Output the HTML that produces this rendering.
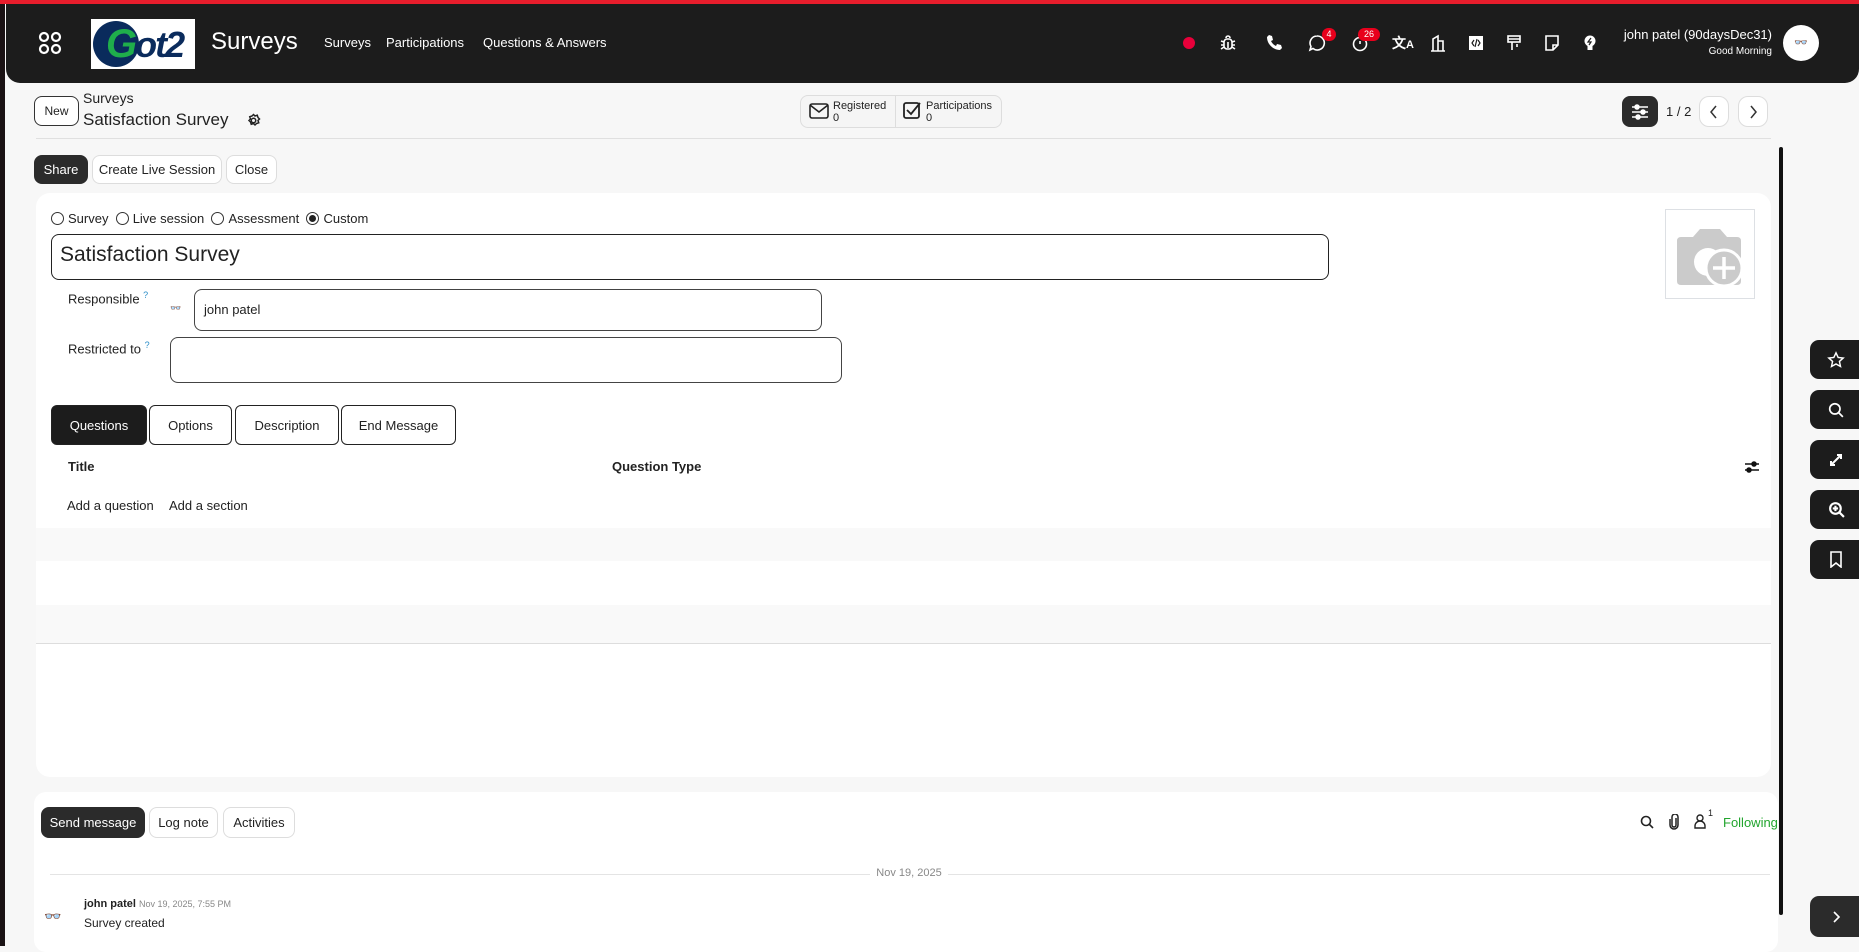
<!DOCTYPE html>
<html><head><meta charset="utf-8"><style>
*{box-sizing:border-box;margin:0;padding:0}
body{width:1859px;height:946px;overflow:hidden;background:#f7f7f7;font-family:"Liberation Sans",sans-serif;color:#222;position:relative}
.a{position:absolute}
.btn{position:absolute;border:1px solid #ddd;border-radius:8px;background:#fff;font-size:13px;display:flex;align-items:center;justify-content:center;color:#222}
.dark{background:#2b2b2b;color:#fff;border-color:#2b2b2b}
.nav{font-size:13px;color:#fff;top:35px}
.ic{position:absolute;top:33px;width:20px;height:20px}
.sb{position:absolute;left:1810px;width:52px;height:39px;background:#1c1c1c;border-radius:9px 0 0 9px;display:flex;align-items:center;justify-content:center}
.tab{position:absolute;top:405px;height:40px;border:1px solid #222;border-radius:6px;background:#fff;font-size:13px;display:flex;align-items:center;justify-content:center}
.radio{display:inline-block;width:13px;height:13px;border:1px solid #333;border-radius:50%;vertical-align:-2px;margin-right:4px;position:relative}
</style></head><body>
<div class="a" style="left:0;top:0;width:5px;height:946px;background:#1a1214"></div>
<div class="a" style="left:0;top:0;width:1859px;height:4px;background:#e81d2c"></div>
<div class="a" style="left:6px;top:4px;width:1853px;height:79px;background:#1c1c1c;border-radius:0 0 14px 14px"></div>
<!-- apps icon -->
<svg class="a" style="left:38px;top:31px" width="24" height="24" viewBox="0 0 24 24" fill="none" stroke="#fff" stroke-width="2.2"><circle cx="6" cy="6" r="4"/><circle cx="18" cy="6" r="4"/><circle cx="6" cy="18" r="4"/><circle cx="18" cy="18" r="4"/></svg>
<div class="a" style="left:91px;top:19px;width:104px;height:50px;background:#fff;overflow:hidden">
<div class="a" style="left:2px;top:2px;width:46px;height:46px;border-radius:50%;background:#0a2b5c"></div>
<div class="a" style="left:15px;top:3px;font:italic bold 40px/44px 'Liberation Sans',sans-serif;color:#1fae4b;letter-spacing:-2px">G<span style="color:#0a2b5c;font-size:36px">ot2</span></div>
</div>
<div class="a" style="left:211px;top:28px;font-size:24px;color:#fff">Surveys</div>
<div class="a nav" style="left:324px">Surveys</div>
<div class="a nav" style="left:386px">Participations</div>
<div class="a nav" style="left:483px">Questions &amp; Answers</div>
<div class="a" style="left:1183px;top:37px;width:12px;height:12px;border-radius:50%;background:#e8003a"></div>
<svg class="ic" style="left:1218px" viewBox="0 0 20 20" fill="none" stroke="#fff" stroke-width="1.6"><rect x="6" y="6" width="8" height="10" rx="3"/><path d="M8 5a2 2 0 0 1 4 0M3 8l3 1M17 8l-3 1M3 12h3M17 12h-3M3 16l3-2M17 16l-3-2M10 9v6"/></svg>
<svg class="ic" style="left:1264px" viewBox="0 0 20 20" fill="#fff"><path d="M5 2l3 1 1 4-2 1a10 10 0 0 0 5 5l1-2 4 1 1 3-2 2C9 17 3 11 3 4z"/></svg>
<svg class="ic" style="left:1307px" viewBox="0 0 20 20" fill="none" stroke="#fff" stroke-width="1.6"><path d="M10 3a7 7 0 1 1-4 12.5L3 17l1-3.5A7 7 0 0 1 10 3z"/></svg>
<div class="a" style="left:1322px;top:28px;width:14px;height:13px;border-radius:7px;background:#e8001c;color:#fff;font-size:9px;text-align:center;line-height:13px">4</div>
<svg class="ic" style="left:1350px" viewBox="0 0 20 20" fill="none" stroke="#fff" stroke-width="1.6"><circle cx="10" cy="11" r="6.5"/><path d="M10 8v3M8 2h4"/></svg>
<div class="a" style="left:1358px;top:28px;width:22px;height:13px;border-radius:7px;background:#e8001c;color:#fff;font-size:9px;text-align:center;line-height:13px">26</div>
<div class="a" style="left:1392px;top:33px;color:#fff;font-size:14px;font-weight:bold">文<span style="font-size:11px">A</span></div>
<svg class="ic" style="left:1428px" viewBox="0 0 20 20" fill="none" stroke="#fff" stroke-width="1.6"><path d="M3 18h14M5 18V6l5-3v15M10 8h5v10"/></svg>
<svg class="ic" style="left:1466px" viewBox="0 0 20 20"><rect x="3" y="3" width="14" height="14" fill="#fff"/><path d="M8 7l-2 3 2 3M12 7l2 3-2 3M11 6l-2 8" stroke="#1c1c1c" stroke-width="1.2" fill="none"/></svg>
<svg class="ic" style="left:1504px" viewBox="0 0 20 20" fill="none" stroke="#fff" stroke-width="1.6"><rect x="4" y="3" width="12" height="6"/><path d="M4 6h12M8 9v8M13 11v3"/></svg>
<svg class="ic" style="left:1542px" viewBox="0 0 20 20" fill="none" stroke="#fff" stroke-width="1.6"><path d="M4 3h12v9l-5 5H4z M11 17v-5h5"/></svg>
<svg class="ic" style="left:1580px" viewBox="0 0 20 20" fill="#fff"><circle cx="10" cy="8" r="5.5"/><rect x="7.5" y="13" width="5" height="4"/><path d="M11 5l-3 4h3l-2 3" stroke="#1c1c1c" stroke-width="1.2" fill="none"/></svg>
<div class="a" style="right:87px;top:27px;color:#fff;font-size:13px;text-align:right">john patel (90daysDec31)</div>
<div class="a" style="right:87px;top:46px;color:#fff;font-size:10px;text-align:right">Good Morning</div>
<div class="a" style="left:1783px;top:25px;width:36px;height:36px;border-radius:50%;background:#fff;color:#777;font-size:11px;text-align:center;line-height:36px">👓</div>

<!-- control panel -->
<div class="btn" style="left:34px;top:96px;width:45px;height:30px;border-color:#333;font-size:12px">New</div>
<div class="a" style="left:83px;top:90px;font-size:14px">Surveys</div>
<div class="a" style="left:83px;top:110px;font-size:17px">Satisfaction Survey</div>
<svg class="a" style="left:246px;top:113px" width="15" height="15" viewBox="0 0 20 20" fill="none" stroke="#222" stroke-width="2"><circle cx="10" cy="10" r="3"/><path d="M10 2l2 2 3-1 1 3 2 2-2 2 1 3-3 1-2 2-2-2-3 1-1-3-2-2 2-2-1-3 3-1z"/></svg>
<div class="a" style="left:800px;top:95px;width:202px;height:33px;border:1px solid #ddd;border-radius:8px;background:#f5f5f5"></div>
<div class="a" style="left:895px;top:96px;width:1px;height:31px;background:#ddd"></div>
<svg class="a" style="left:809px;top:102px" width="20" height="18" viewBox="0 0 20 18" fill="none" stroke="#222" stroke-width="1.6"><rect x="1" y="2" width="18" height="14" rx="2"/><path d="M1 3l9 7 9-7"/></svg>
<div class="a" style="left:833px;top:100px;font-size:11px;line-height:12px">Registered<br>0</div>
<svg class="a" style="left:903px;top:101px" width="18" height="18" viewBox="0 0 18 18" fill="none" stroke="#222" stroke-width="1.8"><rect x="1" y="2" width="15" height="15" rx="2"/><path d="M4 9l4 4 9-11"/></svg>
<div class="a" style="left:926px;top:100px;font-size:11px;line-height:12px">Participations<br>0</div>
<div class="btn dark" style="left:1622px;top:96px;width:36px;height:31px">
<svg width="18" height="16" viewBox="0 0 18 16" stroke="#fff" stroke-width="1.5" fill="#fff"><path d="M1 3h16M1 8h16M1 13h16"/><circle cx="6" cy="3" r="2"/><circle cx="12" cy="8" r="2"/><circle cx="7" cy="13" r="2"/></svg></div>
<div class="a" style="left:1666px;top:104px;font-size:13px">1 / 2</div>
<div class="btn" style="left:1699px;top:96px;width:30px;height:31px;border-radius:10px"><svg width="10" height="14" viewBox="0 0 10 14" fill="none" stroke="#333" stroke-width="1.5"><path d="M7 1L2 7l5 6"/></svg></div>
<div class="btn" style="left:1738px;top:96px;width:30px;height:31px;border-radius:10px"><svg width="10" height="14" viewBox="0 0 10 14" fill="none" stroke="#333" stroke-width="1.5"><path d="M3 1l5 6-5 6"/></svg></div>
<div class="a" style="left:36px;top:138px;width:1735px;height:1px;background:#e0e0e0"></div>

<div class="btn dark" style="left:34px;top:155px;width:54px;height:29px">Share</div>
<div class="btn" style="left:92px;top:155px;width:130px;height:29px">Create Live Session</div>
<div class="btn" style="left:226px;top:155px;width:51px;height:29px">Close</div>
<div class="a" style="left:1779px;top:147px;width:4px;height:768px;background:#111;border-radius:2px"></div>

<!-- sheet -->
<div class="a" style="left:36px;top:193px;width:1735px;height:584px;background:#fff;border-radius:14px"></div>
<div class="a" style="left:51px;top:211px;font-size:13px">
<span class="radio"></span>Survey &nbsp;<span class="radio"></span>Live session &nbsp;<span class="radio"></span>Assessment &nbsp;<span class="radio"><span style="position:absolute;left:2px;top:2px;width:7px;height:7px;border-radius:50%;background:#222"></span></span>Custom</div>
<div class="a" style="left:51px;top:234px;width:1278px;height:46px;border:1px solid #222;border-radius:8px;font-size:21px;padding:8px 8px">Satisfaction Survey</div>
<div class="a" style="left:68px;top:290px;font-size:13px">Responsible <sup style="color:#2a8dc8;font-size:9px">?</sup></div>
<div class="a" style="left:170px;top:303px;font-size:9px;color:#999">👓</div>
<div class="a" style="left:194px;top:289px;width:628px;height:42px;border:1px solid #444;border-radius:8px;font-size:13px;padding:12px 9px">john patel</div>
<div class="a" style="left:68px;top:340px;font-size:13px">Restricted to <sup style="color:#2a8dc8;font-size:9px">?</sup></div>
<div class="a" style="left:170px;top:337px;width:672px;height:46px;border:1px solid #444;border-radius:8px"></div>
<div class="a" style="left:1665px;top:209px;width:90px;height:90px;border:1px solid #dde0e4">
<svg width="88" height="88" viewBox="0 0 88 88"><path d="M11 31q0-4 4-4h12l7-8h20l7 8h10q4 0 4 4v40q0 4-4 4H15q-4 0-4-4z" fill="#cbcbcb"/><circle cx="42" cy="52" r="14" fill="#fff"/><circle cx="58" cy="58" r="18" fill="#cbcbcb" stroke="#fff" stroke-width="3"/><path d="M58 47v22M47 58h22" stroke="#fff" stroke-width="3.5"/></svg></div>
<div class="tab" style="left:51px;width:96px;background:#1c1c1c;color:#fff">Questions</div>
<div class="tab" style="left:149px;width:83px">Options</div>
<div class="tab" style="left:235px;width:104px">Description</div>
<div class="tab" style="left:341px;width:115px">End Message</div>
<div class="a" style="left:68px;top:459px;font-size:13px;font-weight:bold">Title</div>
<div class="a" style="left:612px;top:459px;font-size:13px;font-weight:bold">Question Type</div>
<svg class="a" style="left:1744px;top:460px" width="16" height="14" viewBox="0 0 16 14" stroke="#111" stroke-width="1.5" fill="#111"><path d="M1 4h14M1 10h14"/><circle cx="10" cy="4" r="2"/><circle cx="5" cy="10" r="2"/></svg>
<div class="a" style="left:67px;top:498px;font-size:13px">Add a question</div>
<div class="a" style="left:169px;top:498px;font-size:13px">Add a section</div>
<div class="a" style="left:36px;top:528px;width:1735px;height:33px;background:#f9f9f9"></div>
<div class="a" style="left:36px;top:605px;width:1735px;height:38px;background:#f9f9f9"></div>
<div class="a" style="left:36px;top:643px;width:1735px;height:1px;background:#ddd"></div>

<!-- chatter -->
<div class="a" style="left:34px;top:792px;width:1744px;height:160px;background:#fff;border-radius:12px"></div>
<div class="btn dark" style="left:41px;top:807px;width:104px;height:31px">Send message</div>
<div class="btn" style="left:149px;top:807px;width:69px;height:31px">Log note</div>
<div class="btn" style="left:223px;top:807px;width:72px;height:31px">Activities</div>
<svg class="a" style="left:1640px;top:815px" width="14" height="14" viewBox="0 0 14 14" fill="none" stroke="#222" stroke-width="1.6"><circle cx="6" cy="6" r="4.5"/><path d="M9.5 9.5L13 13"/></svg>
<svg class="a" style="left:1668px;top:814px" width="12" height="16" viewBox="0 0 12 16" fill="none" stroke="#222" stroke-width="1.5"><path d="M8 4v7a2 2 0 0 1-4 0V3a3 3 0 0 1 6 0v8a4 4 0 0 1-8 0V5"/></svg>
<svg class="a" style="left:1694px;top:814px" width="12" height="15" viewBox="0 0 12 15" fill="none" stroke="#222" stroke-width="1.4"><circle cx="6" cy="4" r="3"/><path d="M1 14v-2a4 4 0 0 1 10 0v2z"/></svg>
<div class="a" style="left:1708px;top:808px;font-size:9px">1</div>
<div class="a" style="left:1723px;top:815px;font-size:13px;color:#22a52e">Following</div>
<div class="a" style="left:50px;top:874px;width:1720px;height:1px;background:#e4e4e4"></div>
<div class="a" style="left:870px;top:867px;width:78px;background:#fff;text-align:center;font-size:11px;color:#888">Nov 19, 2025</div>
<div class="a" style="left:44px;top:908px;font-size:14px;color:#888">👓</div>
<div class="a" style="left:84px;top:898px;font-size:11px;font-weight:bold">john patel <span style="font-weight:normal;color:#888;font-size:9px">Nov 19, 2025, 7:55 PM</span></div>
<div class="a" style="left:84px;top:916px;font-size:12px">Survey created</div>

<!-- sidebar -->
<div class="sb" style="top:340px"><svg width="18" height="18" viewBox="0 0 20 20" fill="none" stroke="#fff" stroke-width="1.6"><path d="M10 2l2.4 5.2 5.6.6-4.2 3.8 1.2 5.6L10 14.4l-5 2.8 1.2-5.6L2 7.8l5.6-.6z"/></svg></div>
<div class="sb" style="top:390px"><svg width="16" height="16" viewBox="0 0 14 14" fill="none" stroke="#fff" stroke-width="1.5"><circle cx="6" cy="6" r="4.5"/><path d="M9.5 9.5L13 13"/></svg></div>
<div class="sb" style="top:440px"><svg width="16" height="16" viewBox="0 0 16 16" fill="none" stroke="#fff" stroke-width="2"><path d="M3 13l10-10M9 3h4v4M3 9v4h4"/></svg></div>
<div class="sb" style="top:490px"><svg width="17" height="17" viewBox="0 0 16 16" fill="none" stroke="#fff" stroke-width="2"><circle cx="7" cy="7" r="5"/><path d="M11 11l4 4M7 4.5v5M4.5 7h5"/></svg></div>
<div class="sb" style="top:540px"><svg width="14" height="17" viewBox="0 0 14 17" fill="none" stroke="#fff" stroke-width="1.6"><path d="M2 1h10v15l-5-4-5 4z"/></svg></div>
<div class="sb" style="top:896px;height:41px;background:#2b2b2b"><svg width="10" height="14" viewBox="0 0 10 14" fill="none" stroke="#fff" stroke-width="1.6"><path d="M3 2l5 5-5 5"/></svg></div>
</body></html>
